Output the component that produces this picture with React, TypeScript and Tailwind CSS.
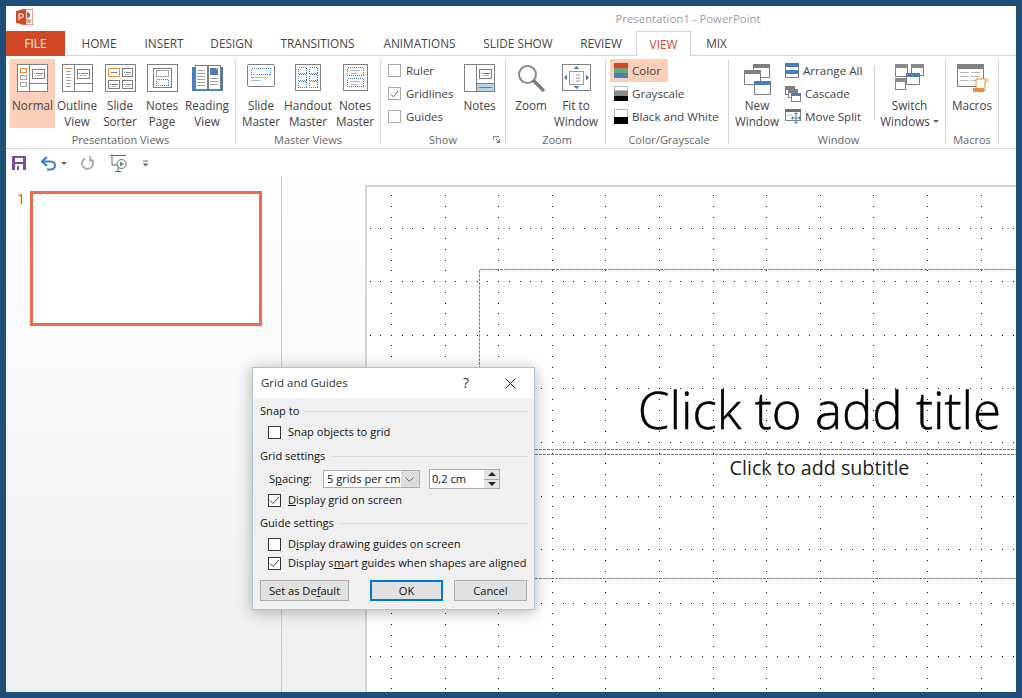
import type { ReactNode } from "react";

const GREY = "#7f7f7f";
const BLUE = "#4a7ebb";
const ORANGE = "#ed8b3c";

function Ic({ w, h, children }: { w: number; h: number; children: ReactNode }) {
  return (
    <svg width={w} height={h} viewBox={`0 0 ${w} ${h}`} shapeRendering="crispEdges" className="block shrink-0">
      {children}
    </svg>
  );
}

function Box({ x, y, w, h, c = GREY, fill = "#fff", dash }: { x: number; y: number; w: number; h: number; c?: string; fill?: string; dash?: string }) {
  return <rect x={x + 0.5} y={y + 0.5} width={w - 1} height={h - 1} stroke={c} fill={fill} strokeDasharray={dash} />;
}

function MiniSlide({ x, y, w = 13, h = 10 }: { x: number; y: number; w?: number; h?: number }) {
  return (
    <>
      <Box x={x} y={y} w={w} h={h} />
      <rect x={x + 2} y={y + 4} width={1} height={1} fill={GREY} />
      <rect x={x + 4} y={y + 4} width={w - 6} height={1} fill={GREY} />
      <rect x={x + 3} y={y + 6} width={w - 6} height={1} fill="#bbb" />
    </>
  );
}

const NormalIcon = () => (
  <Ic w={31} h={28}>
    <Box x={0} y={0} w={31} h={28} />
    <rect x={12} y={0} width={1} height={28} fill={GREY} />
    <rect x={12} y={19} width={19} height={1} fill={GREY} />
    <Box x={3} y={4} w={7} h={5} c={ORANGE} />
    <Box x={3} y={11} w={7} h={5} c="#a5a5a5" />
    <Box x={3} y={18} w={7} h={5} c="#a5a5a5" />
    <MiniSlide x={15} y={5} />
  </Ic>
);

const OutlineIcon = () => (
  <Ic w={31} h={28}>
    <Box x={0} y={0} w={31} h={28} />
    <rect x={12} y={0} width={1} height={28} fill={GREY} />
    <rect x={12} y={19} width={19} height={1} fill={GREY} />
    <rect x={3} y={4} width={7} height={1} fill={ORANGE} />
    {[7, 10, 13, 16, 19, 22].map((y) => (
      <rect key={y} x={4} y={y} width={5} height={1} fill="#a5a5a5" />
    ))}
    <MiniSlide x={15} y={5} />
  </Ic>
);

const SorterIcon = () => (
  <Ic w={31} h={28}>
    <Box x={0} y={0} w={31} h={28} />
    <Box x={3} y={4} w={12} h={9} c={ORANGE} />
    <MiniSlide x={17} y={4} w={11} h={9} />
    <MiniSlide x={3} y={16} w={12} h={9} />
    <MiniSlide x={17} y={16} w={11} h={9} />
    <rect x={6} y={8} width={6} height={1} fill={GREY} />
  </Ic>
);

const NotesPageIcon = () => (
  <Ic w={31} h={28}>
    <Box x={0} y={0} w={31} h={28} />
    <Box x={6} y={4} w={19} h={20} />
    <Box x={9} y={6} w={13} h={7} c="#a5a5a5" />
    <Box x={9} y={15} w={13} h={7} c={BLUE} dash="1 1" />
  </Ic>
);

const ReadingIcon = () => (
  <Ic w={31} h={27}>
    <rect x={0} y={3} width={31} height={24} fill={BLUE} />
    <rect x={3} y={1} width={12} height={24} fill="#fff" stroke={GREY} />
    <rect x={16} y={1} width={12} height={24} fill="#fff" stroke={GREY} />
    {[6, 9, 12, 15, 18, 21].map((y) => (
      <rect key={y} x={5} y={y} width={8} height={1} fill="#a5a5a5" />
    ))}
    <rect x={18} y={4} width={8} height={7} fill={BLUE} />
    <rect x={24} y={4} width={2} height={2} fill={ORANGE} />
    {[14, 17, 20].map((y) => (
      <rect key={y} x={18} y={y} width={8} height={1} fill="#a5a5a5" />
    ))}
  </Ic>
);

const SlideMasterIcon = () => (
  <Ic w={28} h={23}>
    <rect x={0.5} y={0.5} width={27} height={22} rx={2} fill="#fff" stroke={GREY} />
    <rect x={4.5} y={4.5} width={19} height={6} fill="none" stroke={BLUE} strokeDasharray="1 1" />
    <rect x={4} y={13} width={15} height={1} fill="#9dbbdc" />
    <rect x={4} y={16} width={10} height={1} fill="#9dbbdc" />
  </Ic>
);

const HandoutIcon = () => (
  <Ic w={26} h={27}>
    <Box x={0} y={0} w={26} h={27} />
    {[3, 10, 17].map((y) => (
      <g key={y}>
        <Box x={3} y={y} w={9} h={7} c={BLUE} dash="1 1" />
        <Box x={14} y={y} w={9} h={7} c={BLUE} dash="1 1" />
      </g>
    ))}
  </Ic>
);

const NotesMasterIcon = () => (
  <Ic w={25} h={27}>
    <Box x={0} y={0} w={25} h={27} />
    <Box x={4} y={3} w={17} h={9} c={BLUE} dash="1 1" />
    <Box x={4} y={14} w={17} h={9} c={BLUE} dash="1 1" />
    <rect x={8} y={6} width={9} height={1} fill="#9dbbdc" />
    <rect x={8} y={9} width={7} height={1} fill="#9dbbdc" />
    <rect x={8} y={17} width={9} height={1} fill="#9dbbdc" />
    <rect x={8} y={20} width={7} height={1} fill="#9dbbdc" />
  </Ic>
);

const NotesIcon = () => (
  <Ic w={31} h={28}>
    <Box x={0} y={0} w={31} h={28} />
    <rect x={12} y={0} width={1} height={28} fill={GREY} />
    <rect x={13} y={19} width={17} height={8} fill="#bcd2e8" />
    <rect x={12} y={19} width={19} height={1} fill={GREY} />
    <rect x={15} y={23} width={13} height={1} fill={BLUE} />
    <MiniSlide x={15} y={5} />
  </Ic>
);

const ZoomIcon = () => (
  <svg width={28} height={28} viewBox="0 0 28 28" className="block">
    <circle cx={10.5} cy={10.5} r={8.5} fill="#fff" stroke="#8a8a8a" strokeWidth={2} />
    <path d="M17 17l9 9" stroke="#7a7a7a" strokeWidth={3.4} strokeLinecap="round" />
  </svg>
);

const FitIcon = () => (
  <svg width={29} height={27} viewBox="0 0 29 27" className="block">
    <rect x={0.5} y={0.5} width={28} height={26} fill="#fff" stroke={GREY} />
    <rect x={7.5} y={7.5} width={14} height={13} fill="#fff" stroke="#999" />
    <path d="M11 11h1m2 0h4M11 14h1m2 0h4M11 17h1m2 0h4" stroke="#999" />
    <path d="M14.5 2l3 3h-6zM14.5 25l3-3h-6zM2 13.5l3-3v6zM27 13.5l-3-3v6z" fill={BLUE} />
  </svg>
);

const ColorSwatch = () => (
  <Ic w={14} h={15}>
    <rect width={14} height={5} fill="#d24726" />
    <rect y={5} width={14} height={5} fill="#6aa57a" />
    <rect y={10} width={14} height={5} fill={BLUE} />
  </Ic>
);

const GraySwatch = () => (
  <Ic w={14} h={15}>
    <Box x={0} y={0} w={14} h={5} c="#bbb" />
    <rect y={5} width={14} height={5} fill="#8c8c8c" />
    <rect y={10} width={14} height={5} fill="#000" />
  </Ic>
);

const BwSwatch = () => (
  <Ic w={14} h={15}>
    <Box x={0} y={0} w={14} h={9} c="#bbb" />
    <rect y={8} width={14} height={7} fill="#000" />
  </Ic>
);

function Win({ x, y, w, h, c = "#7f7f7f" }: { x: number; y: number; w: number; h: number; c?: string }) {
  return (
    <>
      <Box x={x} y={y} w={w} h={h} />
      <rect x={x} y={y} width={w} height={4} fill={c} />
    </>
  );
}

const NewWindowIcon = () => (
  <Ic w={27} h={31}>
    <Win x={9} y={0} w={17} h={14} />
    <Win x={0} y={6} w={17} h={15} />
    <Win x={10} y={17} w={17} h={14} c={BLUE} />
  </Ic>
);

const ArrangeIcon = () => (
  <Ic w={14} h={15}>
    <Box x={0} y={0} w={14} h={15} />
    <rect width={14} height={4} fill={BLUE} />
    <rect y={7} width={14} height={4} fill={BLUE} />
  </Ic>
);

const CascadeIcon = () => (
  <Ic w={16} h={16}>
    <Win x={0} y={0} w={10} h={9} />
    <Win x={3} y={3} w={10} h={9} />
    <Box x={6} y={7} w={10} h={9} />
    <rect x={6} y={7} width={10} height={3} fill={BLUE} />
  </Ic>
);

const MoveSplitIcon = () => (
  <svg width={16} height={15} viewBox="0 0 16 15" className="block">
    <rect x={0.5} y={0.5} width={15} height={11} fill="#fff" stroke={GREY} />
    <rect width={16} height={3} fill="#6f6f6f" />
    <path d="M2 6h6" stroke="#999" strokeDasharray="1 1" />
    <path d="M11 4v10M7 9h8" stroke={BLUE} />
    <path d="M11 3l2 2H9zM11 15l2-2H9zM6 9l2-2v4zM16 9l-2-2v4z" fill={BLUE} />
  </svg>
);

const SwitchIcon = () => (
  <Ic w={29} h={26}>
    <Win x={0} y={0} w={13} h={13} c="#8a8a8a" />
    <Win x={16} y={0} w={13} h={12} c="#8a8a8a" />
    <Win x={0} y={14} w={11} h={12} c="#8a8a8a" />
    <Win x={11} y={9} w={14} h={12} c={BLUE} />
  </Ic>
);

const MacrosIcon = () => (
  <svg width={31} height={29} viewBox="0 0 31 29" className="block">
    <rect x={0.5} y={0.5} width={26} height={22} fill="#fff" stroke={GREY} />
    <rect width={27} height={5} fill="#808080" />
    <path d="M3 8.5h9m2 0h9M3 12.5h9m2 0h9M3 16.5h9m2 0h5" stroke="#b5b5b5" />
    <path d="M19 15h11v2h-2v10h-11v-2h2z" fill="#fff" stroke={ORANGE} />
    <rect x={16} y={24} width={11} height={4} fill={ORANGE} />
  </svg>
);

function LargeButton({ icon, lines, className = "" }: { icon: ReactNode; lines: string[]; className?: string }) {
  return (
    <div className={`flex h-[69px] shrink-0 flex-col items-center pt-[5px] ${className}`}>
      <div className="flex h-[33px] shrink-0 items-start justify-center">{icon}</div>
      {lines.map((l) => (
        <div key={l} className="shrink-0 whitespace-nowrap text-center text-[11.7px] leading-[16px]">
          {l}
        </div>
      ))}
    </div>
  );
}

function RibbonGroup({ label, className, children }: { label: string; className: string; children: ReactNode }) {
  return (
    <div className={`relative flex h-[92px] shrink-0 flex-col pt-[3px] ${className}`}>
      <div className="flex h-[73px] items-start">{children}</div>
      <div className="whitespace-nowrap text-center text-[11px] leading-[16px] text-[#666]">{label}</div>
    </div>
  );
}

const Sep = () => <div className="mt-[4px] h-[84px] w-px shrink-0 bg-[#d4d4d4]" />;

function SmallRow({ icon, label, className = "" }: { icon: ReactNode; label: string; className?: string }) {
  return (
    <div className={`flex h-[23px] items-center whitespace-nowrap text-[11.6px] ${className}`}>
      {icon}
      <span className="ml-[4px]">{label}</span>
    </div>
  );
}

function RibbonCheck({ label, checked }: { label: string; checked?: boolean }) {
  return (
    <div className="flex h-[23px] items-center gap-[5px] whitespace-nowrap text-[11.4px]">
      <span className="flex h-[13px] w-[13px] items-center justify-center border border-[#ababab] bg-white">
        {checked && (
          <svg width={9} height={8} viewBox="0 0 9 8">
            <path d="M1 4l2.5 3L8 1" fill="none" stroke="#777" />
          </svg>
        )}
      </span>
      {label}
    </div>
  );
}

const TABS = [
  { label: "HOME", cls: "w-[64px] ml-[2px]" },
  { label: "INSERT", cls: "w-[66px]" },
  { label: "DESIGN", cls: "w-[69px]" },
  { label: "TRANSITIONS", cls: "w-[103px]" },
  { label: "ANIMATIONS", cls: "w-[101px]" },
  { label: "SLIDE SHOW", cls: "w-[96px]" },
  { label: "REVIEW", cls: "w-[70px]" },
];

function TabBar() {
  return (
    <div className="flex h-[25px] shrink-0 border-b border-[#d4d4d4] text-[11.8px] text-[#444]">
      <div className="flex h-[25px] w-[59px] items-center justify-center bg-[#d24726] pt-px text-white">FILE</div>
      {TABS.map((t) => (
        <div key={t.label} className={`flex h-[24px] items-center justify-center whitespace-nowrap pt-[2px] ${t.cls}`}>
          {t.label}
        </div>
      ))}
      <div className="flex h-[25px] w-[55px] items-center justify-center border-x border-t border-[#d4d4d4] bg-white pt-px text-[#d24726]">
        VIEW
      </div>
      <div className="flex h-[24px] w-[51px] items-center justify-center pt-[2px]">MIX</div>
    </div>
  );
}

function Ribbon() {
  return (
    <div className="flex h-[93px] shrink-0 border-b border-[#d4d4d4] text-[#444]">
      <RibbonGroup label="Presentation Views" className="w-[229px] px-[4px]">
        <LargeButton icon={<NormalIcon />} lines={["Normal"]} className="w-[45px] bg-[#fccfb8]" />
        <LargeButton icon={<OutlineIcon />} lines={["Outline", "View"]} className="w-[44px]" />
        <LargeButton icon={<SorterIcon />} lines={["Slide", "Sorter"]} className="w-[42px]" />
        <LargeButton icon={<NotesPageIcon />} lines={["Notes", "Page"]} className="w-[42px]" />
        <LargeButton icon={<ReadingIcon />} lines={["Reading", "View"]} className="w-[48px]" />
      </RibbonGroup>
      <Sep />
      <RibbonGroup label="Master Views" className="w-[144px] px-[4px]">
        <LargeButton icon={<SlideMasterIcon />} lines={["Slide", "Master"]} className="w-[42px]" />
        <LargeButton icon={<HandoutIcon />} lines={["Handout", "Master"]} className="w-[52px]" />
        <LargeButton icon={<NotesMasterIcon />} lines={["Notes", "Master"]} className="w-[42px]" />
      </RibbonGroup>
      <Sep />
      <RibbonGroup label="Show" className="w-[124px]">
        <div className="w-[78px] pl-[7px]">
          <RibbonCheck label="Ruler" />
          <RibbonCheck label="Gridlines" checked />
          <RibbonCheck label="Guides" />
        </div>
        <LargeButton icon={<NotesIcon />} lines={["Notes"]} className="w-[41px]" />
        <svg width={7} height={7} viewBox="0 0 7 7" className="absolute bottom-[5px] right-[5px]">
          <path d="M0.5 4V0.5H6" fill="none" stroke="#888" />
          <path d="M3 3l3 3M6.5 3.5v3h-3" fill="none" stroke="#666" />
        </svg>
      </RibbonGroup>
      <Sep />
      <RibbonGroup label="Zoom" className="w-[99px] pl-[3px]">
        <LargeButton icon={<ZoomIcon />} lines={["Zoom"]} className="w-[44px]" />
        <LargeButton icon={<FitIcon />} lines={["Fit to", "Window"]} className="w-[46px]" />
      </RibbonGroup>
      <Sep />
      <RibbonGroup label="Color/Grayscale" className="w-[122px] pl-[4px]">
        <div>
          <SmallRow icon={<ColorSwatch />} label="Color" className="w-[58px] bg-[#fccfb8] pl-[4px]" />
          <SmallRow icon={<GraySwatch />} label="Grayscale" className="pl-[4px]" />
          <SmallRow icon={<BwSwatch />} label="Black and White" className="pl-[4px]" />
        </div>
      </RibbonGroup>
      <Sep />
      <RibbonGroup label="Window" className="w-[216px] pl-[3px]">
        <LargeButton icon={<NewWindowIcon />} lines={["New", "Window"]} className="w-[50px]" />
        <div className="w-[92px] pl-[3px]">
          <SmallRow icon={<ArrangeIcon />} label="Arrange All" />
          <SmallRow icon={<CascadeIcon />} label="Cascade" />
          <SmallRow icon={<MoveSplitIcon />} label="Move Split" />
        </div>
        <div className="mt-[7px] h-[54px] w-px shrink-0 bg-[#d4d4d4]" />
        <div className="flex h-[69px] w-[69px] shrink-0 flex-col items-center pt-[5px]">
          <div className="flex h-[33px] shrink-0 items-start justify-center">
            <SwitchIcon />
          </div>
          <div className="shrink-0 text-[11.7px] leading-[16px]">Switch</div>
          <div className="flex shrink-0 items-center gap-[3px] whitespace-nowrap text-[11.7px] leading-[16px]">
            Windows
            <span className="h-0 w-0 border-x-[3px] border-t-[3px] border-x-transparent border-t-[#666]" />
          </div>
        </div>
      </RibbonGroup>
      <Sep />
      <RibbonGroup label="Macros" className="w-[52px]">
        <LargeButton icon={<MacrosIcon />} lines={["Macros"]} className="w-[52px]" />
      </RibbonGroup>
      <Sep />
    </div>
  );
}

function QuickAccess() {
  return (
    <div className="flex h-[28px] shrink-0 items-center bg-white">
      <svg width={14} height={14} viewBox="0 0 14 14" className="ml-[6px] block">
        <path d="M0 0h14v14H0z" fill="#7a4b9f" />
        <rect x={3} y={2} width={8} height={4} fill="#fff" />
        <rect x={3} y={8} width={8} height={6} fill="#fff" />
        <rect x={5} y={10} width={2} height={4} fill="#7a4b9f" />
      </svg>
      <svg width={15} height={15} viewBox="0 0 15 15" className="ml-[15px] block">
        <path d="M1.5 5.5h8c6 0 6 8 0 8H6" fill="none" stroke="#3f7cbf" strokeWidth={2} />
        <path d="M6 1L1 5.5 6 10" fill="none" stroke="#3f7cbf" strokeWidth={2} />
      </svg>
      <span className="ml-[5px] h-0 w-0 border-x-[3px] border-t-[3px] border-x-transparent border-t-[#666]" />
      <svg width={14} height={14} viewBox="0 0 14 14" className="ml-[14px] block">
        <path d="M9 2.5a5.5 5.5 0 1 1-5 0" fill="none" stroke="#b0b0b0" strokeWidth={2} />
        <path d="M9 0v5h4" fill="none" stroke="#b0b0b0" strokeWidth={1.6} />
      </svg>
      <svg width={17} height={17} viewBox="0 0 17 17" className="ml-[15px] block">
        <path d="M0 0.5h16M2 1v9h6M8 12v4M5 16.5h6" fill="none" stroke="#666" />
        <circle cx={11.5} cy={9} r={4.5} fill="#fff" stroke="#666" />
        <path d="M10 6.5v5l4-2.5z" fill="#4e9a83" />
      </svg>
      <svg width={7} height={7} viewBox="0 0 7 7" className="ml-[15px] block">
        <path d="M1 1h5" stroke="#666" />
        <path d="M0.5 3.5h6L3.5 6.5z" fill="#666" />
      </svg>
    </div>
  );
}

const STEP = 53.6;
const DOTS: { x: number; y: number }[] = [];
for (let c = 0; c < 12; c++) {
  for (let j = -4; j < 50; j++) {
    DOTS.push({ x: Math.round(24 + c * STEP), y: Math.round(40.5 + (j * STEP) / 5) });
  }
}
for (let r = 0; r < 9; r++) {
  for (let i = -2; i < 60; i++) {
    if (i % 5 !== 0) DOTS.push({ x: Math.round(24 + (i * STEP) / 5), y: Math.round(40.5 + r * STEP) });
  }
}

function Slide() {
  return (
    <div className="relative h-[520px] w-[700px] border-l-2 border-t-2 border-[#d6d6d6] bg-white text-black">
      <div className="absolute left-[112px] top-[82px] flex h-[181px] w-[681px] items-end justify-center pb-[9px]">
        <span className="whitespace-nowrap text-[51px] font-light leading-[64px] [-webkit-text-stroke:0.5px_black]">
          Click to add title
        </span>
      </div>
      <div className="absolute left-[112px] top-[267px] flex h-[125px] w-[681px] justify-center">
        <span className="whitespace-nowrap text-[19.7px] leading-[28px] text-[#222]">Click to add subtitle</span>
      </div>
      <svg width={700} height={520} shapeRendering="crispEdges" className="pointer-events-none absolute left-0 top-0">
        <path
          d="M112.5 262V82.5H700M112 262.5H700M112 267.5H700M112 391.5H700"
          fill="none"
          stroke="#808080"
          strokeDasharray="3 1"
        />
        {DOTS.map((d) => (
          <rect key={`${d.x}-${d.y}`} x={d.x} y={d.y} width={1} height={1} fill="#111" />
        ))}
      </svg>
    </div>
  );
}

function DlgCheck({ checked, children }: { checked?: boolean; children: ReactNode }) {
  return (
    <div className="flex h-[16px] items-center gap-[7px] whitespace-nowrap">
      <span className="flex h-[13px] w-[13px] items-center justify-center border border-[#333] bg-white">
        {checked && (
          <svg width={11} height={9} viewBox="0 0 11 9">
            <path d="M1 4.5l3 3L10 1" fill="none" stroke="#444" />
          </svg>
        )}
      </span>
      <span>{children}</span>
    </div>
  );
}

function Legend({ children }: { children: ReactNode }) {
  return (
    <div className="flex h-[16px] items-center gap-[6px] whitespace-nowrap">
      <span>{children}</span>
      <span className="h-px flex-1 bg-[#dcdcdc]" />
    </div>
  );
}

function DlgButton({ children, primary, className }: { children: ReactNode; primary?: boolean; className: string }) {
  return (
    <div
      className={`flex h-[21px] items-center justify-center whitespace-nowrap bg-[#e1e1e1] ${
        primary ? "border-2 border-[#0078d7]" : "border border-[#adadad]"
      } ${className}`}
    >
      {children}
    </div>
  );
}

function GridDialog() {
  return (
    <div className="absolute left-[246px] top-[361px] flex h-[243px] w-[283px] flex-col border border-[#a9c7e8] bg-[#f0f0f0] text-[11.1px] leading-[16px] text-[#111] shadow-[0_2px_14px_rgba(0,0,0,0.3)]">
      <div className="flex h-[30px] shrink-0 items-center bg-white pl-[8px] text-[11.5px] text-[#333]">
        <span className="w-[202px]">Grid and Guides</span>
        <span className="w-[42px] text-[14px]">?</span>
        <svg width={11} height={11} viewBox="0 0 11 11">
          <path d="M0.5 0.5l10 10M10.5 0.5l-10 10" stroke="#222" />
        </svg>
      </div>
      <div className="flex flex-1 flex-col pl-[7px] pr-[6px] pt-[5px]">
        <Legend>Snap to</Legend>
        <div className="mt-[5px] pl-[8px]">
          <DlgCheck>
            Snap objects to <u>g</u>rid
          </DlgCheck>
        </div>
        <div className="mt-[8px]">
          <Legend>Grid settings</Legend>
        </div>
        <div className="mt-[5px] flex h-[20px] items-center pl-[9px]">
          <span className="w-[54px]">
            S<u>p</u>acing:
          </span>
          <div className="flex h-[18px] w-[97px] items-center border border-[#acacac] bg-white pl-[3px]">
            <span className="w-[74px] whitespace-nowrap">5 grids per cm</span>
            <span className="flex h-[16px] w-[19px] items-center justify-center bg-[#dcdcdc]">
              <svg width={9} height={5} viewBox="0 0 9 5">
                <path d="M0.5 0.5l4 4 4-4" fill="none" stroke="#666" />
              </svg>
            </span>
          </div>
          <div className="ml-[9px] flex h-[20px] w-[71px] items-center justify-between border border-[#acacac] bg-white pl-[2px]">
            <span>0,2 cm</span>
            <span className="flex h-[18px] w-[15px] flex-col bg-[#e4e4e4]">
              <span className="flex flex-1 items-center justify-center border-b border-[#aaa]">
                <span className="h-0 w-0 border-x-[4px] border-b-[4px] border-x-transparent border-b-[#222]" />
              </span>
              <span className="flex flex-1 items-center justify-center">
                <span className="h-0 w-0 border-x-[4px] border-t-[4px] border-x-transparent border-t-[#222]" />
              </span>
            </span>
          </div>
        </div>
        <div className="mt-[3px] pl-[8px]">
          <DlgCheck checked>
            <u>D</u>isplay grid on screen
          </DlgCheck>
        </div>
        <div className="mt-[7px]">
          <Legend>Guide settings</Legend>
        </div>
        <div className="mt-[5px] pl-[8px]">
          <DlgCheck>
            D<u>i</u>splay drawing guides on screen
          </DlgCheck>
        </div>
        <div className="mt-[3px] pl-[8px]">
          <DlgCheck checked>
            Display s<u>m</u>art guides when shapes are aligned
          </DlgCheck>
        </div>
        <div className="mt-[9px] flex">
          <DlgButton className="w-[89px]">
            Set as De<u>f</u>ault
          </DlgButton>
          <DlgButton primary className="ml-[21px] w-[73px]">
            OK
          </DlgButton>
          <DlgButton className="ml-[11px] w-[73px]">Cancel</DlgButton>
        </div>
      </div>
    </div>
  );
}

export default function App() {
  return (
    <div className="relative flex h-[698px] w-[1022px] flex-col overflow-hidden border-[6px] border-[#1f4e79] bg-white font-['Open_Sans','Liberation_Sans',sans-serif]">
      <div className="relative flex h-[25px] shrink-0 items-center justify-center pl-[354px] text-[11.4px] text-[#a0a0a0]">
        <svg width={17} height={16} viewBox="0 0 17 16" className="absolute left-[10px] top-[3px]">
          <rect x={6} y={0} width={11} height={16} fill="#fff" stroke="#d24726" />
          <path d="M11 3a3 3 0 1 1 0 6z" fill="#d24726" />
          <path d="M10 11h5M10 13h5" stroke="#d24726" />
          <path d="M0 2l10-2v16L0 14z" fill="#d24726" />
          <path d="M3 11V5h2.5a1.8 1.8 0 0 1 0 3.6H3" fill="none" stroke="#fff" strokeWidth={1.2} />
        </svg>
        Presentation1 - PowerPoint
      </div>
      <TabBar />
      <Ribbon />
      <QuickAccess />
      <div className="flex min-h-0 flex-1 bg-gradient-to-b from-white to-[#efefef]">
        <div className="flex w-[276px] shrink-0 items-start border-r border-[#c8c8c8] pl-[11px] pt-[14px]">
          <span className="w-[13px] text-[14px] leading-[16px] text-[#d24726]">1</span>
          <div className="h-[135px] w-[232px] border-[3px] border-[#ed6c4d] bg-white" />
        </div>
        <div className="min-w-0 flex-1 overflow-hidden pl-[83px] pt-[8px]">
          <Slide />
        </div>
      </div>
      <GridDialog />
    </div>
  );
}
